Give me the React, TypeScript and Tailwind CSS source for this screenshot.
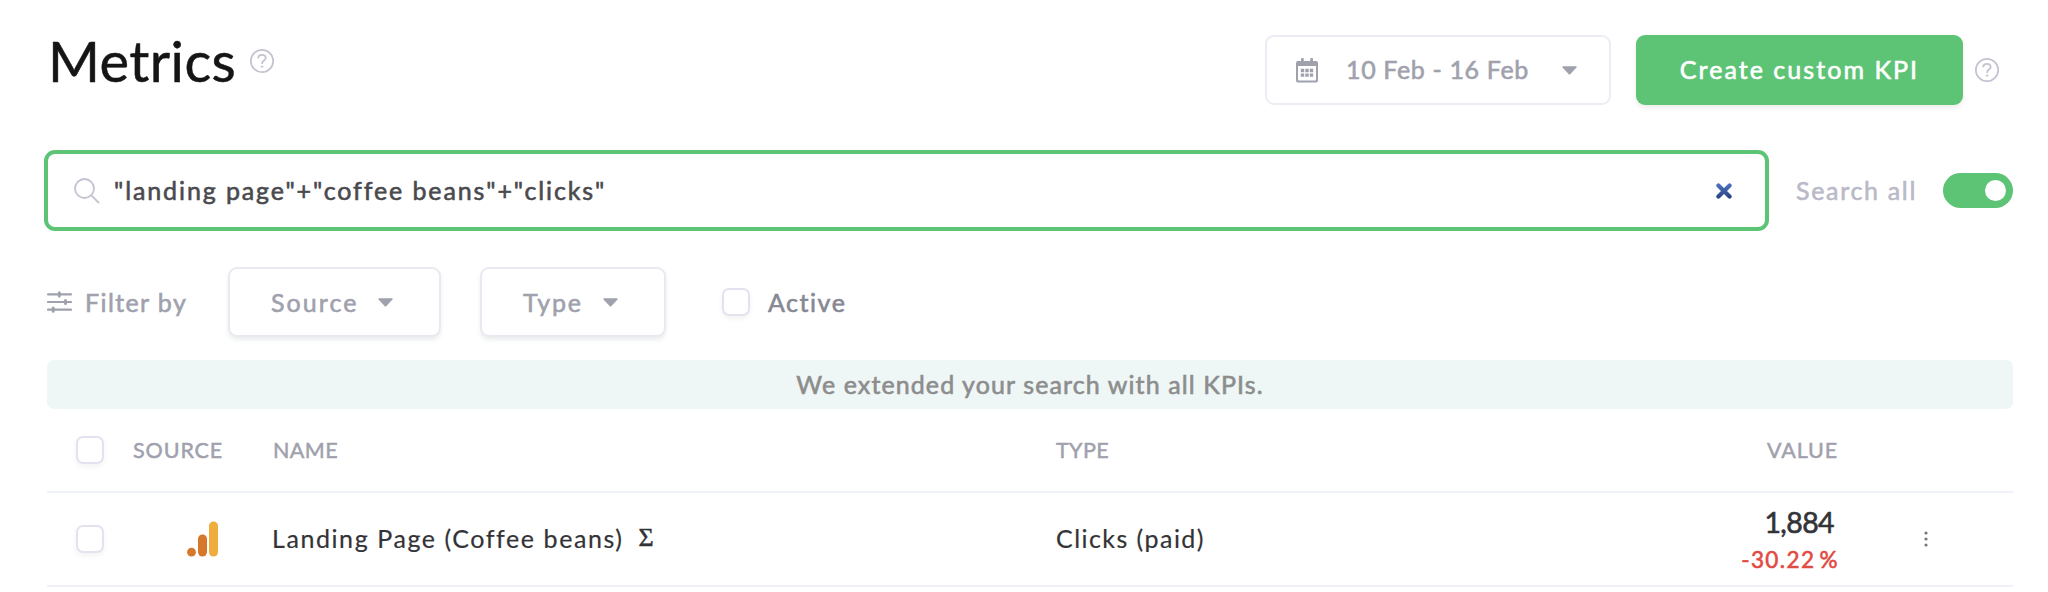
import type { ReactNode } from "react";

function HelpIcon() {
  return (
    <svg className="size-[26px] shrink-0" viewBox="0 0 26 26" fill="none" stroke="#c3c3d1" strokeLinecap="round">
      <circle cx="13" cy="13" r="11.2" strokeWidth="1.7" />
      <path d="M9.2 9.6C9.5 7.8 11 6.9 12.9 6.9c2.1 0 3.8 1.1 3.8 3 0 2.7-3.6 2.5-3.6 5.3" strokeWidth="1.8" />
      <circle cx="13" cy="18.6" r="0.8" fill="#c3c3d1" strokeWidth="0.8" />
    </svg>
  );
}

function Caret() {
  return (
    <svg className="h-[9px] w-[15px] shrink-0" viewBox="0 0 15 9">
      <path d="M1 .3h13c.7 0 1 .8.5 1.3L8.2 8.2a1 1 0 0 1-1.4 0L.5 1.6C0 1.1.3.3 1 .3z" fill="#9fa1ad" />
    </svg>
  );
}

function CalendarIcon() {
  return (
    <svg className="h-[25px] w-[22px] shrink-0" viewBox="0 0 22 25" fill="#9fa1ad">
      <path
        fillRule="evenodd"
        d="M2 3h3V1.2a1.3 1.3 0 0 1 2.8 0V3h6.4V1.2a1.3 1.3 0 0 1 2.8 0V3h3a2 2 0 0 1 2 2v17.5a2 2 0 0 1-2 2H2a2 2 0 0 1-2-2V5a2 2 0 0 1 2-2zM2 8v13.8c0 .4.3.7.7.7h16.6c.4 0 .7-.3.7-.7V8z"
      />
      <path d="M4.8 10.8h3.4v3.4h-3.4zM9.3 10.8h3.4v3.4h-3.4zM13.8 10.8h3.4v3.4h-3.4zM4.8 15.4h3.4v3.4h-3.4zM9.3 15.4h3.4v3.4h-3.4zM13.8 15.4h3.4v3.4h-3.4z" />
    </svg>
  );
}

function SearchIcon() {
  return (
    <svg className="size-[26px] shrink-0" viewBox="0 0 26 26" fill="none" stroke="#c3c3d1" strokeWidth="1.8" strokeLinecap="round">
      <circle cx="10.5" cy="10.5" r="9.5" />
      <path d="M17.3 17.3L24.5 24.5" />
    </svg>
  );
}

function FilterIcon() {
  return (
    <svg className="h-[22px] w-[25px] shrink-0" viewBox="0 0 25 22" fill="none" stroke="#9fa1ad" strokeLinecap="round">
      <path d="M1 3.3h23M1 11h23M1 18.7h23" strokeWidth="2.2" />
      <path d="M12.3 1.7v3.2M18.5 9.4v3.2M6.2 17.1v3.2" strokeWidth="3" />
    </svg>
  );
}

function ClearIcon() {
  return (
    <svg className="size-[16px] shrink-0" viewBox="0 0 16 16">
      <defs>
        <linearGradient id="clear" gradientUnits="userSpaceOnUse" x1="0" y1="0" x2="0" y2="16">
          <stop offset="0" stopColor="#4f78c4" />
          <stop offset="1" stopColor="#26407a" />
        </linearGradient>
      </defs>
      <path d="M2.4 2.4L13.6 13.6M13.6 2.4L2.4 13.6" stroke="url(#clear)" strokeWidth="4.2" strokeLinecap="round" />
    </svg>
  );
}

function AnalyticsIcon() {
  return (
    <svg className="h-[36px] w-[31px] shrink-0" viewBox="0 0 31 36">
      <rect x="22" y="0.5" width="9" height="35" rx="4.4" fill="#eead3d" />
      <rect x="11" y="13.5" width="9" height="22" rx="4.4" fill="#d5782c" />
      <circle cx="4.5" cy="31.2" r="4.4" fill="#d5782c" />
    </svg>
  );
}

function Checkbox() {
  return <span className="block size-[28px] shrink-0 rounded-[7px] border-2 border-[#e3e3f0] bg-white shadow-[0_3px_5px_rgba(60,60,90,0.06)]" />;
}

function Dropdown({ children, className }: { children: ReactNode; className: string }) {
  return (
    <button
      className={`flex h-[70px] items-center rounded-[9px] border-2 border-[#e9e9f2] bg-white pl-[41px] text-[25px] text-[#9fa1ad] shadow-[0_3px_4px_rgba(60,90,90,0.1)] [-webkit-text-stroke:0.6px] ${className}`}
    >
      {children}
    </button>
  );
}

export default function App() {
  return (
    <div className="h-[592px] w-[2048px] overflow-hidden bg-white font-[Lato,sans-serif] leading-[30px] whitespace-nowrap">
      <header className="flex h-[150px] items-start pt-[35px] pr-[48px] pl-[48px]">
        <h1 className="mt-[-4px] text-[56px] leading-[60px] tracking-[0.4px] text-[#151515] [-webkit-text-stroke:0.5px]">Metrics</h1>
        <div className="mt-[13px] ml-[13px]">
          <HelpIcon />
        </div>
        <button className="ml-auto flex h-[70px] w-[346px] items-center rounded-[9px] border-2 border-[#ececf4] pl-[29px] text-[25px] text-[#9fa1ad] [-webkit-text-stroke:0.6px]">
          <CalendarIcon />
          <span className="mb-[3px] ml-[28px] w-[216px] text-left tracking-[0.63px]">10 Feb - 16 Feb</span>
          <Caret />
        </button>
        <button className="ml-[25px] h-[70px] w-[327px] rounded-[9px] bg-[#5dc476] pb-[3px] text-[25px] tracking-[2.05px] text-white shadow-[0_3px_5px_rgba(0,0,0,0.07)] [-webkit-text-stroke:0.6px]">
          Create custom KPI
        </button>
        <div className="mt-[22px] ml-[11px]">
          <HelpIcon />
        </div>
      </header>

      <section className="flex h-[81px] items-center pl-[44px]">
        <div className="flex h-[81px] w-[1725px] items-center rounded-[11px] border-4 border-[#5dc476] pr-[33px] pl-[26px]">
          <SearchIcon />
          <span className="mb-[2px] ml-[14px] text-[25px] tracking-[1.89px] text-[#4a4a4e] [-webkit-text-stroke:0.6px]">
            "landing page"+"coffee beans"+"clicks"
          </span>
          <span className="ml-auto">
            <ClearIcon />
          </span>
        </div>
        <span className="mb-[2px] ml-[27px] w-[147px] text-[25px] tracking-[1.68px] text-[#b9b9c8] [-webkit-text-stroke:0.6px]">Search all</span>
        <span className="flex h-[35px] w-[70px] items-center justify-end rounded-full bg-[#5dc476] pr-[7px]">
          <span className="size-[21px] rounded-full bg-white" />
        </span>
      </section>

      <section className="mt-[36px] flex h-[70px] items-center pl-[47px] text-[25px] text-[#9fa1ad] [-webkit-text-stroke:0.6px]">
        <FilterIcon />
        <span className="ml-[13px] w-[143px] tracking-[1.4px]">Filter by</span>
        <Dropdown className="w-[213px]">
          <span className="w-[107px] text-left tracking-[2.05px]">Source</span>
          <Caret />
        </Dropdown>
        <Dropdown className="ml-[39px] w-[186px]">
          <span className="w-[80px] text-left tracking-[1.77px]">Type</span>
          <Caret />
        </Dropdown>
        <div className="ml-[56px] flex items-center gap-[18px]">
          <Checkbox />
          <span className="tracking-[1.53px] text-[#868893]">Active</span>
        </div>
      </section>

      <div className="mt-[23px] ml-[47px] flex h-[49px] w-[1966px] items-center justify-center rounded-[7px] bg-[#eff6f6] pb-[2px] text-[25px] tracking-[1.1px] text-[#8d8d8d] [-webkit-text-stroke:0.6px]">
        We extended your search with all KPIs.
      </div>

      <div className="ml-[47px] w-[1966px]">
        <div className="flex h-[84px] items-center border-b-2 border-[#eff2f8] pl-[29px] text-[21.5px] text-[#9fa1ad] [-webkit-text-stroke:0.5px]">
          <Checkbox />
          <span className="ml-[29px] w-[140px] tracking-[0.9px]">SOURCE</span>
          <span className="w-[783px] tracking-[0.4px]">NAME</span>
          <span className="w-[711px] tracking-[0.4px]">TYPE</span>
          <span className="tracking-[0.87px]">VALUE</span>
        </div>
        <div className="flex h-[94px] items-center border-b-2 border-[#f0f0f6] pl-[29px] text-[25px] text-[#333337] [-webkit-text-stroke:0.2px]">
          <Checkbox />
          <span className="ml-[83px] w-[85px]">
            <AnalyticsIcon />
          </span>
          <span className="mb-[2px] flex w-[784px] items-center">
            <span className="tracking-[1.58px]">Landing Page (Coffee beans)</span>
            <span className="ml-[15px] font-['Liberation_Serif',serif] text-[26px] [-webkit-text-stroke:0.5px]">Σ</span>
          </span>
          <span className="mb-[2px] w-[645px] tracking-[1.45px]">Clicks (paid)</span>
          <span className="flex w-[138px] flex-col items-end pt-[4px] [-webkit-text-stroke:0.6px]">
            <span className="mr-[5px] text-[28.5px] leading-[32px] tracking-[-0.6px]">1,884</span>
            <span className="mt-[6px] text-[22.5px] leading-[32px] tracking-[1.4px] [word-spacing:-3px] text-[#e14b42]">-30.22 %</span>
          </span>
          <svg className="ml-[84px] h-[16px] w-[6px]" viewBox="0 0 6 16" fill="#77777d">
            <circle cx="3" cy="2" r="1.6" />
            <circle cx="3" cy="8" r="1.6" />
            <circle cx="3" cy="14" r="1.6" />
          </svg>
        </div>
      </div>
    </div>
  );
}
